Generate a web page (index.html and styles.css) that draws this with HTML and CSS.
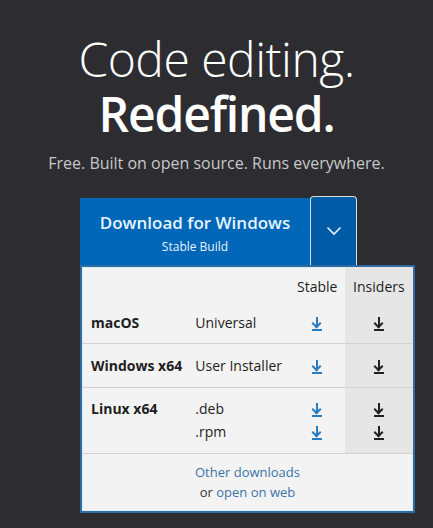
FILE: index.html
```html
<!DOCTYPE html>
<html>
<head>
  <title>Code editing. Redefined.</title>
  <meta charset="utf-8">
  <link rel="stylesheet" href="styles.css">
</head>
<body>
  <div class="hero">
    <h1 class="title"><span class="light">Code editing.</span><span class="bold">Redefined.</span></h1>
    <p class="sub">Free. Built on open source. Runs everywhere.</p>

    <div class="download">
      <div class="btn-row">
        <a class="btn-main" href="#">
          <span class="btn-title">Download for Windows</span>
          <span class="btn-sub">Stable Build</span>
        </a>
        <a class="btn-drop" href="#">
          <svg width="16" height="10" viewBox="0 0 16 10"><path d="M1.5 1.5 L8 8 L14.5 1.5" fill="none" stroke="#e8f4ff" stroke-width="1.6"/></svg>
        </a>
      </div>

      <div class="panel">
        <table class="dl-table">
          <tr class="head">
            <td class="c-os"></td>
            <td class="c-kind"></td>
            <td class="c-st">Stable</td>
            <td class="c-in">Insiders</td>
          </tr>
          <tr class="row first">
            <td class="c-os">macOS</td>
            <td class="c-kind">Universal</td>
            <td class="c-st"><span class="ico blue"></span></td>
            <td class="c-in"><span class="ico"></span></td>
          </tr>
          <tr class="row">
            <td class="c-os">Windows x64</td>
            <td class="c-kind">User Installer</td>
            <td class="c-st"><span class="ico blue"></span></td>
            <td class="c-in"><span class="ico"></span></td>
          </tr>
          <tr class="row multi">
            <td class="c-os">Linux x64</td>
            <td class="c-kind">.deb<br>.rpm</td>
            <td class="c-st"><span class="ico blue"></span><br><span class="ico blue"></span></td>
            <td class="c-in"><span class="ico"></span><br><span class="ico"></span></td>
          </tr>
        </table>
        <div class="foot">
          <a href="#">Other downloads</a><br>
          or <a href="#">open on web</a>
        </div>
      </div>
    </div>
  </div>
</body>
</html>
```
FILE: styles.css
```css
body {
  margin: 0;
  padding: 0;
  background-color: #2c2c31;
  color: #fff;
  font-family: "Open Sans", "Noto Sans", sans-serif;
}
.hero {
  text-align: center;
  padding-top: 31px;
}
.title {
  margin: 0;
  font-size: 48px;
  line-height: 55px;
  letter-spacing: -0.5px;
}
.title span {
  display: block;
}
.title .light {
  font-weight: 300;
}
.title .bold {
  font-weight: 600;
  letter-spacing: -1.2px;
}
.sub {
  margin: 11px 0 0;
  font-size: 16px;
  color: #c8c8c8;
}
.download {
  width: 335px;
  margin: 22px 0 0 80px;
  text-align: left;
}
.btn-row {
  display: flex;
  align-items: flex-end;
}
.btn-main {
  width: 230px;
  height: 67px;
  background: #0066b8;
  color: #e6f3ff;
  text-decoration: none;
  display: flex;
  flex-direction: column;
  align-items: center;
  justify-content: center;
}
.btn-title {
  font-size: 17px;
  font-weight: 600;
  margin-top: 2px;
}
.btn-sub {
  font-size: 12px;
  margin-top: 4px;
}
.btn-drop {
  width: 45px;
  height: 68px;
  background: #005ba6;
  border: 1.5px solid #dcdcdc;
  border-bottom: none;
  border-radius: 4px 4px 0 0;
  display: flex;
  align-items: center;
  justify-content: center;
}
.panel {
  background: #f3f3f3;
  border: 2px solid #2f6aa3;
  box-shadow: inset 0 0 0 1px #d4eefa;
  color: #1e1e1e;
}
.dl-table {
  width: 100%;
  border-collapse: collapse;
  font-size: 14px;
  line-height: 20px;
}
.dl-table td {
  padding: 0;
}
.c-os {
  width: 104px;
  padding-left: 9px !important;
  font-weight: 700;
}
.c-kind {
  width: 94px;
}
.c-st {
  width: 55px;
  text-align: center;
}
.c-in {
  width: 68px;
  text-align: center;
  background: #e6e6e6;
}
.head td {
  padding-top: 10px;
  padding-bottom: 7px;
}
.row td {
  border-bottom: 1px solid #d2d2d2;
  padding-top: 12px;
  padding-bottom: 11px;
}
.row.first td {
  padding-top: 9px;
  padding-bottom: 10px;
}
.row.multi td {
  vertical-align: top;
  padding-top: 9px;
  padding-bottom: 10px;
  line-height: 23px;
}
.ico {
  display: inline-block;
  width: 10px;
  height: 14px;
  vertical-align: middle;
  background:
    linear-gradient(#222, #222) 4px 0 / 2px 9px no-repeat,
    linear-gradient(#222, #222) 0 12px / 10px 2px no-repeat;
  position: relative;
}
.ico::after {
  content: "";
  position: absolute;
  left: 1px;
  top: 3px;
  width: 5px;
  height: 5px;
  border-right: 2px solid #222;
  border-bottom: 2px solid #222;
  transform: rotate(45deg);
}
.ico.blue {
  background:
    linear-gradient(#2b7cbf, #2b7cbf) 4px 0 / 2px 9px no-repeat,
    linear-gradient(#2b7cbf, #2b7cbf) 0 12px / 10px 2px no-repeat;
}
.ico.blue::after {
  border-color: #2b7cbf;
}
.foot {
  text-align: center;
  font-size: 13px;
  line-height: 20px;
  padding: 8px 0 9px;
  color: #333;
}
.foot a {
  color: #3b74a8;
  text-decoration: none;
}
```
